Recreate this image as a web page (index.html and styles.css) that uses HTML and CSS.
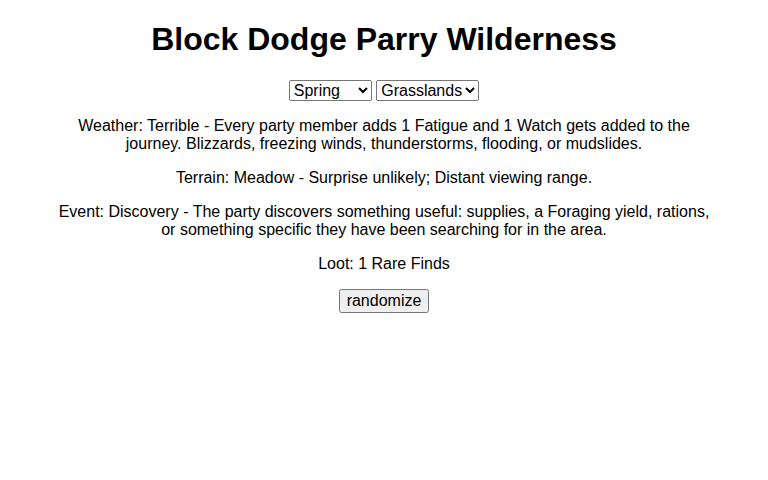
FILE: index.html
```html
<!DOCTYPE html>
<html lang="en">
<head>
    <meta charset="UTF-8">
    <meta name="viewport" content="width=device-width, initial-scale=1.0">
    <title>Block Dodge Parry Wilderness</title>
    <link rel="stylesheet" href="styles.css">
</head>
<body>

<div class="container">
    <h1>Block Dodge Parry Wilderness</h1>

    <div class="controls">
        <select id="season">
            <option>Spring</option>
            <option>Summer</option>
            <option>Autumn</option>
            <option>Winter</option>
        </select>
        <select id="terrain">
            <option>Grasslands</option>
            <option>Forest</option>
            <option>Mountains</option>
            <option>Swamp</option>
        </select>
    </div>

    <p id="weather">Weather: Terrible - Every party member adds 1 Fatigue and 1 Watch gets added to the journey. Blizzards, freezing winds, thunderstorms, flooding, or mudslides.</p>
    <p id="terrainText">Terrain: Meadow - Surprise unlikely; Distant viewing range.</p>
    <p id="event">Event: Discovery - The party discovers something useful: supplies, a Foraging yield, rations, or something specific they have been searching for in the area.</p>
    <p id="loot">Loot: 1 Rare Finds</p>

    <button class="randomize" onclick="randomize()">randomize</button>
</div>

</body>
</html>
```

FILE: styles.css
```css
body {
    font-family: "Liberation Sans", Arial, sans-serif;
    margin: 0;
    padding: 8px;
    background: #fff;
    color: #000;
}
.container {
    text-align: center;
    max-width: 660px;
    margin: auto;
}
h1 {
    font-size: 32px;
    margin: 13px 0 22px;
}
.controls select {
    font-family: "Liberation Sans", Arial, sans-serif;
    font-size: 16px;
}
p {
    font-size: 16px;
    margin: 16px 0;
}
.randomize {
    font-family: "Liberation Sans", Arial, sans-serif;
    font-size: 16px;
}
```
